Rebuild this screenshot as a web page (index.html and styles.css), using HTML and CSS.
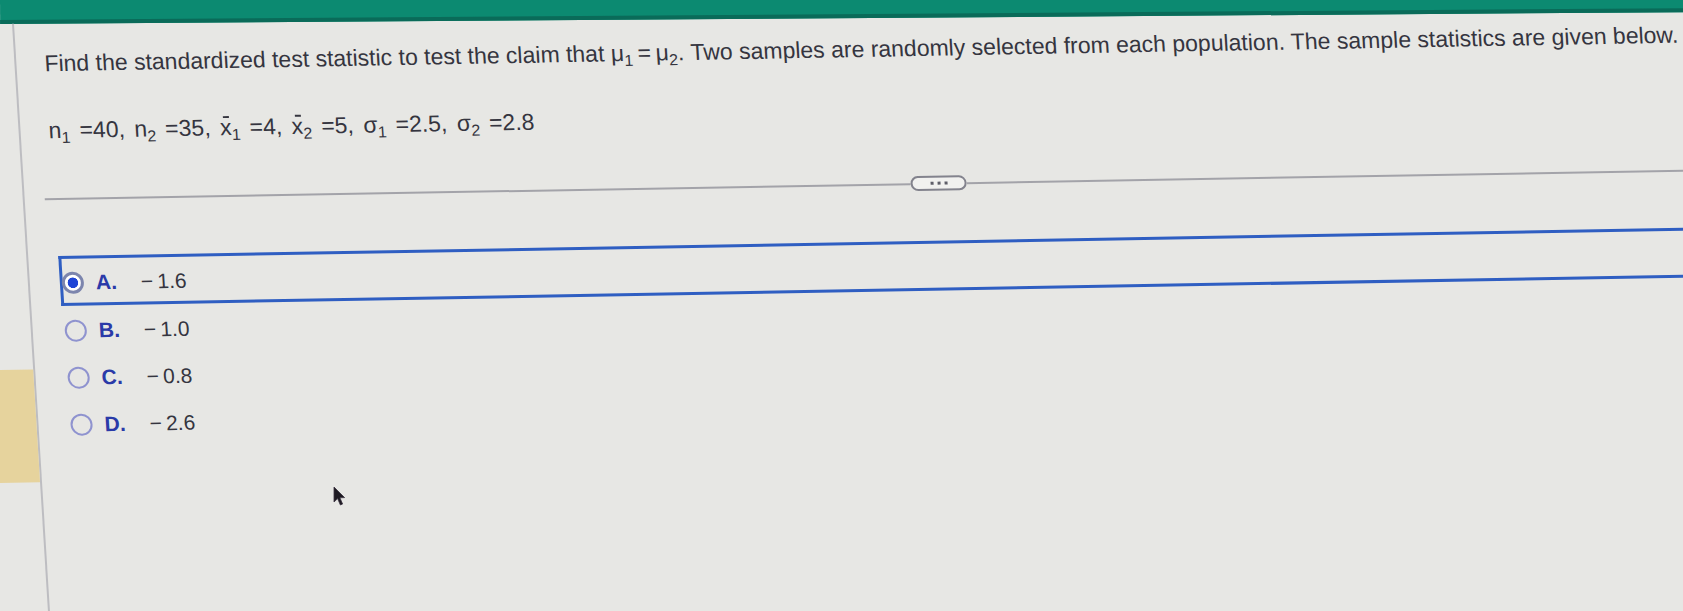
FILE: index.html
```html
<!DOCTYPE html>
<html lang="en">
<head>
<meta charset="utf-8">
<title>Standardized test statistic</title>
<link rel="stylesheet" href="styles.css">
</head>
<body>
<div class="topbar"></div>
<div class="layout">
  <aside class="sidebar"><div class="flag"></div></aside>
  <main class="main">
    <p class="question">Find the standardized test statistic to test the claim that μ<sub>1</sub>&thinsp;=&thinsp;μ<sub>2</sub>. Two samples are randomly selected from each population. The sample statistics are given below.</p>
    <p class="data">n<sub>1</sub>&thinsp;&thinsp;=40, n<sub>2</sub>&thinsp;&thinsp;=35, <span class="xbar">x</span><sub>1</sub>&thinsp;&thinsp;=4, <span class="xbar">x</span><sub>2</sub>&thinsp;&thinsp;=5, σ<sub>1</sub>&thinsp;&thinsp;=2.5, σ<sub>2</sub>&thinsp;&thinsp;=2.8</p>
    <div class="divider">
      <span class="rule rule-left"></span>
      <button class="more" type="button" aria-label="more"><i></i><i></i><i></i></button>
      <span class="rule"></span>
    </div>
    <ul class="choices">
      <li class="choice selected"><span class="radio"></span><span class="letter">A.</span><span class="value">−&thinsp;1.6</span></li>
      <li class="choice"><span class="radio"></span><span class="letter">B.</span><span class="value">−&thinsp;1.0</span></li>
      <li class="choice"><span class="radio"></span><span class="letter">C.</span><span class="value">−&thinsp;0.8</span></li>
      <li class="choice"><span class="radio"></span><span class="letter">D.</span><span class="value">−&thinsp;2.6</span></li>
    </ul>
  </main>
</div>
<svg class="cursor" width="14" height="21" viewBox="0 0 14 21" aria-hidden="true">
  <path d="M1 1 L1 16 L4.6 12.6 L7.4 19 L9.6 18 L6.9 11.8 L11.6 11.6 Z" fill="#1e1a22" stroke="#3a3440" stroke-width="0.8" stroke-linejoin="round"/>
</svg>
</body>
</html>
```

FILE: styles.css
```css
html, body {
  margin: 0;
  height: 611px;
}

body {
  position: relative;
  overflow: hidden;
  background: #e7e7e4;
  font-family: "Liberation Sans", Arial, sans-serif;
  color: #35353f;
}

.topbar {
  width: 1720px;
  height: 20px;
  background: #0c8a71;
  border-bottom: 4px solid #0a6b59;
  transform: rotate(-0.4deg);
  transform-origin: 0 0;
}

.layout {
  display: flex;
  width: 1760px;
  height: 660px;
  transform: rotate(-1deg) skewX(2.5deg);
  transform-origin: 0 0;
}

.sidebar {
  flex: none;
  width: 12px;
  padding-top: 346px;
  border-right: 2px solid #bdbdc1;
}

.flag {
  height: 113px;
  margin-left: -40px;
  background: #e6d39d;
}

.main {
  flex: 1;
  padding: 27px 0 0 28px;
}

.question {
  margin: 0;
  font-size: 23px;
  line-height: 27px;
  white-space: nowrap;
}

.data {
  margin: 40px 0 0;
  font-size: 23px;
  line-height: 27px;
  white-space: nowrap;
  word-spacing: 3px;
}

sub {
  font-size: 16px;
  line-height: 0;
  vertical-align: -5px;
}

.xbar {
  position: relative;
}

.xbar::before {
  content: "";
  position: absolute;
  left: 4px;
  top: 2px;
  width: 6px;
  height: 2px;
  background: currentColor;
}

.divider {
  display: flex;
  align-items: center;
  height: 15px;
  margin: 47px 0 0 -8px;
}

.rule {
  flex: 1;
  height: 2px;
  background: #a3a3a9;
}

.rule-left {
  flex: 0 0 866px;
}

.more {
  flex: none;
  display: flex;
  align-items: center;
  justify-content: center;
  gap: 4px;
  width: 56px;
  height: 15px;
  padding: 0;
  border: 2px solid #83838d;
  border-radius: 8px;
  background: #f1f1ef;
}

.more i {
  width: 3px;
  height: 3px;
  background: #5e5e68;
}

.choices {
  list-style: none;
  margin: 50px 0 0 2px;
  padding: 0;
}

.choice {
  display: flex;
  align-items: center;
  height: 47px;
  box-sizing: border-box;
  padding: 3px 0 0 0;
  border: 3px solid transparent;
  border-right: 0;
  font-size: 21px;
}

.choice.selected {
  height: 50px;
  border-color: #2f5ec2;
}

.radio {
  flex: none;
  width: 22px;
  height: 22px;
  box-sizing: border-box;
  margin: 0 12px 0 -1px;
  border: 2.5px solid #8f93cf;
  border-radius: 50%;
}

.selected .radio {
  border: 3px solid #7c85ad;
  background: radial-gradient(circle, #1e44d6 0 5px, #ffffff 5.5px);
}

.letter {
  flex: none;
  width: 45px;
  font-weight: bold;
  color: #2a3aa8;
}

.value {
  color: #35353f;
}

.cursor {
  position: absolute;
  left: 333px;
  top: 486px;
}
```
